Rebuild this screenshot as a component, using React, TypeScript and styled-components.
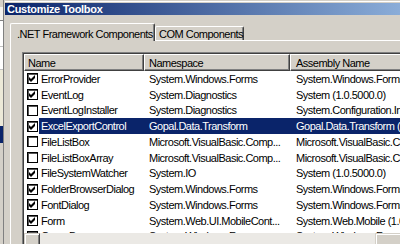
import React from 'react'
import styled, { createGlobalStyle } from 'styled-components'

const GlobalStyle = createGlobalStyle`
  html, body {
    margin: 0;
    padding: 0;
    background: #d4d0c8;
    overflow: hidden;
  }
  body {
    font-family: "Liberation Sans", Arial, sans-serif;
    font-size: 11px;
    letter-spacing: -0.5px;
  }
`

const Screen = styled.div`
  width: 400px;
  height: 244px;
  overflow: hidden;
  display: flex;
  background: #d4d0c8;
`

// sliver of the window that lies behind the dialog
const BehindStrip = styled.div`
  width: 3px;
  flex: none;
  display: flex;
  flex-direction: column;
  border-right: 1px solid #808080;
`

const StripBit = styled.div<{ h: number; c: string }>`
  height: ${({ h }) => h}px;
  flex: none;
  background: ${({ c }) => c};
`

const Dialog = styled.div`
  width: 480px;
  flex: none;
  border-top: 1px solid #d4d0c8;
  border-left: 1px solid #d4d0c8;
  padding-top: 2px;
  box-shadow: inset 0 1px #fff;
  display: flex;
  flex-direction: column;
`

const TitleBar = styled.div`
  height: 16px;
  display: flex;
  align-items: center;
  padding-left: 2px;
  background: linear-gradient(to right, #0a246a, #a6caf0);
  color: #fff;
  font-weight: bold;
  letter-spacing: -0.3px;
`

const Body = styled.div`
  flex: 1;
  padding: 8px 0 0 5px;
  display: flex;
  flex-direction: column;
`

const TabStrip = styled.div`
  display: flex;
  align-items: flex-end;
  height: 17px;
  position: relative;
  z-index: 1;
`

const Tab = styled.div<{ active?: boolean; w: number }>`
  box-sizing: border-box;
  width: ${({ w }) => w}px;
  height: ${({ active }) => (active ? 18 : 14)}px;
  margin-bottom: ${({ active }) => (active ? -1 : 0)}px;
  padding-left: ${({ active }) => (active ? 6 : 3)}px;
  padding-top: ${({ active }) => (active ? 2 : 0)}px;
  display: flex;
  align-items: center;
  background: #d4d0c8;
  border-top: 1px solid #fff;
  border-left: 1px solid #fff;
  border-right: 1px solid #404040;
  box-shadow: inset -1px 0 #808080;
  border-radius: 2px 2px 0 0;
  white-space: nowrap;
  color: #000;
`

const Panel = styled.div`
  flex: 1;
  border-top: 1px solid #fff;
  border-left: 1px solid #fff;
  padding: 11px 0 0 11px;
  display: flex;
  flex-direction: column;
`

const ListOuter = styled.div`
  flex: 1;
  border-top: 1px solid #808080;
  border-left: 1px solid #808080;
  display: flex;
`

const ListInner = styled.div`
  flex: 1;
  border-top: 1px solid #404040;
  border-left: 1px solid #404040;
  background: #fff;
  display: flex;
  flex-direction: column;
`

const Header = styled.div`
  display: flex;
  height: 17px;
  flex: none;
`

const HeadCell = styled.div<{ w?: number; pad: number }>`
  box-sizing: border-box;
  ${({ w }) => (w ? `width: ${w}px; flex: none;` : 'flex: 1;')}
  padding-left: ${({ pad }) => pad}px;
  display: flex;
  align-items: center;
  background: #d4d0c8;
  border-top: 1px solid #fff;
  border-left: 1px solid #fff;
  border-right: 1px solid #404040;
  border-bottom: 1px solid #404040;
  box-shadow: inset -1px -1px #808080;
  white-space: nowrap;
`

const Rows = styled.div`
  height: 162px;
  flex: none;
  overflow: hidden;
`

const Row = styled.div`
  display: flex;
  height: 15.75px;
  align-items: stretch;
`

const NameCell = styled.div`
  width: 120px;
  flex: none;
  display: flex;
  align-items: center;
  padding-left: 3px;
  box-sizing: border-box;
`

const Box = styled.span`
  width: 11px;
  height: 11px;
  flex: none;
  box-sizing: border-box;
  border: 1px solid #000;
  box-shadow: inset 1px 1px #555;
  background: #fff;
  margin-right: 1px;
  display: flex;
  align-items: center;
  justify-content: center;
`

const Label = styled.span<{ sel?: boolean }>`
  flex: 1;
  height: 100%;
  display: flex;
  align-items: center;
  padding-left: 2px;
  white-space: nowrap;
  overflow: hidden;
  background: ${({ sel }) => (sel ? '#0a246a' : 'transparent')};
  color: ${({ sel }) => (sel ? '#fff' : '#000')};
`

const Cell = styled.div<{ w?: number; pad: number; sel?: boolean }>`
  box-sizing: border-box;
  ${({ w }) => (w ? `width: ${w}px; flex: none;` : 'flex: 1;')}
  padding-left: ${({ pad }) => pad}px;
  display: flex;
  align-items: center;
  white-space: nowrap;
  overflow: hidden;
  background: ${({ sel }) => (sel ? '#0a246a' : 'transparent')};
  color: ${({ sel }) => (sel ? '#fff' : '#000')};
`

const HScroll = styled.div`
  height: 16px;
  flex: none;
  display: flex;
  background: #ebe9e5;
`

const ScrollTrack = styled.div<{ w: number }>`
  width: ${({ w }) => w}px;
  flex: none;
`

const ScrollButton = styled.div<{ w: number }>`
  box-sizing: border-box;
  width: ${({ w }) => w}px;
  flex: none;
  height: 16px;
  background: #d4d0c8;
  border-top: 1px solid #d4d0c8;
  border-left: 1px solid #d4d0c8;
  border-right: 1px solid #404040;
  border-bottom: 1px solid #404040;
  box-shadow: inset 1px 1px #fff, inset -1px -1px #808080;
`

const Check = () => (
  <svg width="7" height="7" viewBox="0 0 7 7">
    <path d="M0 2 L2 4 L6 0 L6 3 L2 7 L0 5 Z" fill="#000" />
  </svg>
)

type Item = { on: boolean; name: string; ns: string; asm: string; sel?: boolean }

const items: Item[] = [
  { on: true, name: 'ErrorProvider', ns: 'System.Windows.Forms', asm: 'System.Windows.Forms (1.0.5000.0)' },
  { on: true, name: 'EventLog', ns: 'System.Diagnostics', asm: 'System (1.0.5000.0)' },
  { on: false, name: 'EventLogInstaller', ns: 'System.Diagnostics', asm: 'System.Configuration.Install (1.0.5000.0)' },
  { on: true, name: 'ExcelExportControl', ns: 'Gopal.Data.Transform', asm: 'Gopal.Data.Transform (1.0.0.0)', sel: true },
  { on: false, name: 'FileListBox', ns: 'Microsoft.VisualBasic.Comp...', asm: 'Microsoft.VisualBasic.Compatibility (7.0.5000.0)' },
  { on: false, name: 'FileListBoxArray', ns: 'Microsoft.VisualBasic.Comp...', asm: 'Microsoft.VisualBasic.Compatibility (7.0.5000.0)' },
  { on: true, name: 'FileSystemWatcher', ns: 'System.IO', asm: 'System (1.0.5000.0)' },
  { on: true, name: 'FolderBrowserDialog', ns: 'System.Windows.Forms', asm: 'System.Windows.Forms (1.0.5000.0)' },
  { on: true, name: 'FontDialog', ns: 'System.Windows.Forms', asm: 'System.Windows.Forms (1.0.5000.0)' },
  { on: true, name: 'Form', ns: 'System.Web.UI.MobileCont...', asm: 'System.Web.Mobile (1.0.5000.0)' },
  { on: true, name: 'GroupBox', ns: 'System.Windows.Forms', asm: 'System.Windows.Forms (1.0.5000.0)' },
]

const strip: [number, string][] = [
  [7, '#d4d0c8'],
  [13, '#f4f3ee'],
  [1, '#808080'],
  [25, '#ffffff'],
  [1, '#c0c0c0'],
  [22, '#ffffff'],
  [1, '#c0c0c0'],
  [56, '#ece9d8'],
  [17, '#0a246a'],
  [101, '#d4d0c8'],
]

export default function App() {
  return (
    <Screen>
      <GlobalStyle />
      <BehindStrip>
        {strip.map(([h, c], i) => (
          <StripBit key={i} h={h} c={c} />
        ))}
      </BehindStrip>
      <Dialog>
        <TitleBar>Customize Toolbox</TitleBar>
        <Body>
          <TabStrip>
            <Tab active w={145}>.NET Framework Components</Tab>
            <Tab w={89}>COM Components</Tab>
          </TabStrip>
          <Panel>
            <ListOuter>
              <ListInner>
                <Header>
                  <HeadCell w={120} pad={3}>Name</HeadCell>
                  <HeadCell w={146} pad={4}>Namespace</HeadCell>
                  <HeadCell pad={5}>Assembly Name</HeadCell>
                </Header>
                <Rows>
                  {items.map((it) => (
                    <Row key={it.name}>
                      <NameCell>
                        <Box>{it.on && <Check />}</Box>
                        <Label sel={it.sel}>{it.name}</Label>
                      </NameCell>
                      <Cell w={146} pad={5} sel={it.sel}>{it.ns}</Cell>
                      <Cell pad={6} sel={it.sel}>{it.asm}</Cell>
                    </Row>
                  ))}
                </Rows>
                <HScroll>
                  <ScrollButton w={16} />
                  <ScrollTrack w={335} />
                  <ScrollButton w={60} />
                </HScroll>
              </ListInner>
            </ListOuter>
          </Panel>
        </Body>
      </Dialog>
    </Screen>
  )
}
